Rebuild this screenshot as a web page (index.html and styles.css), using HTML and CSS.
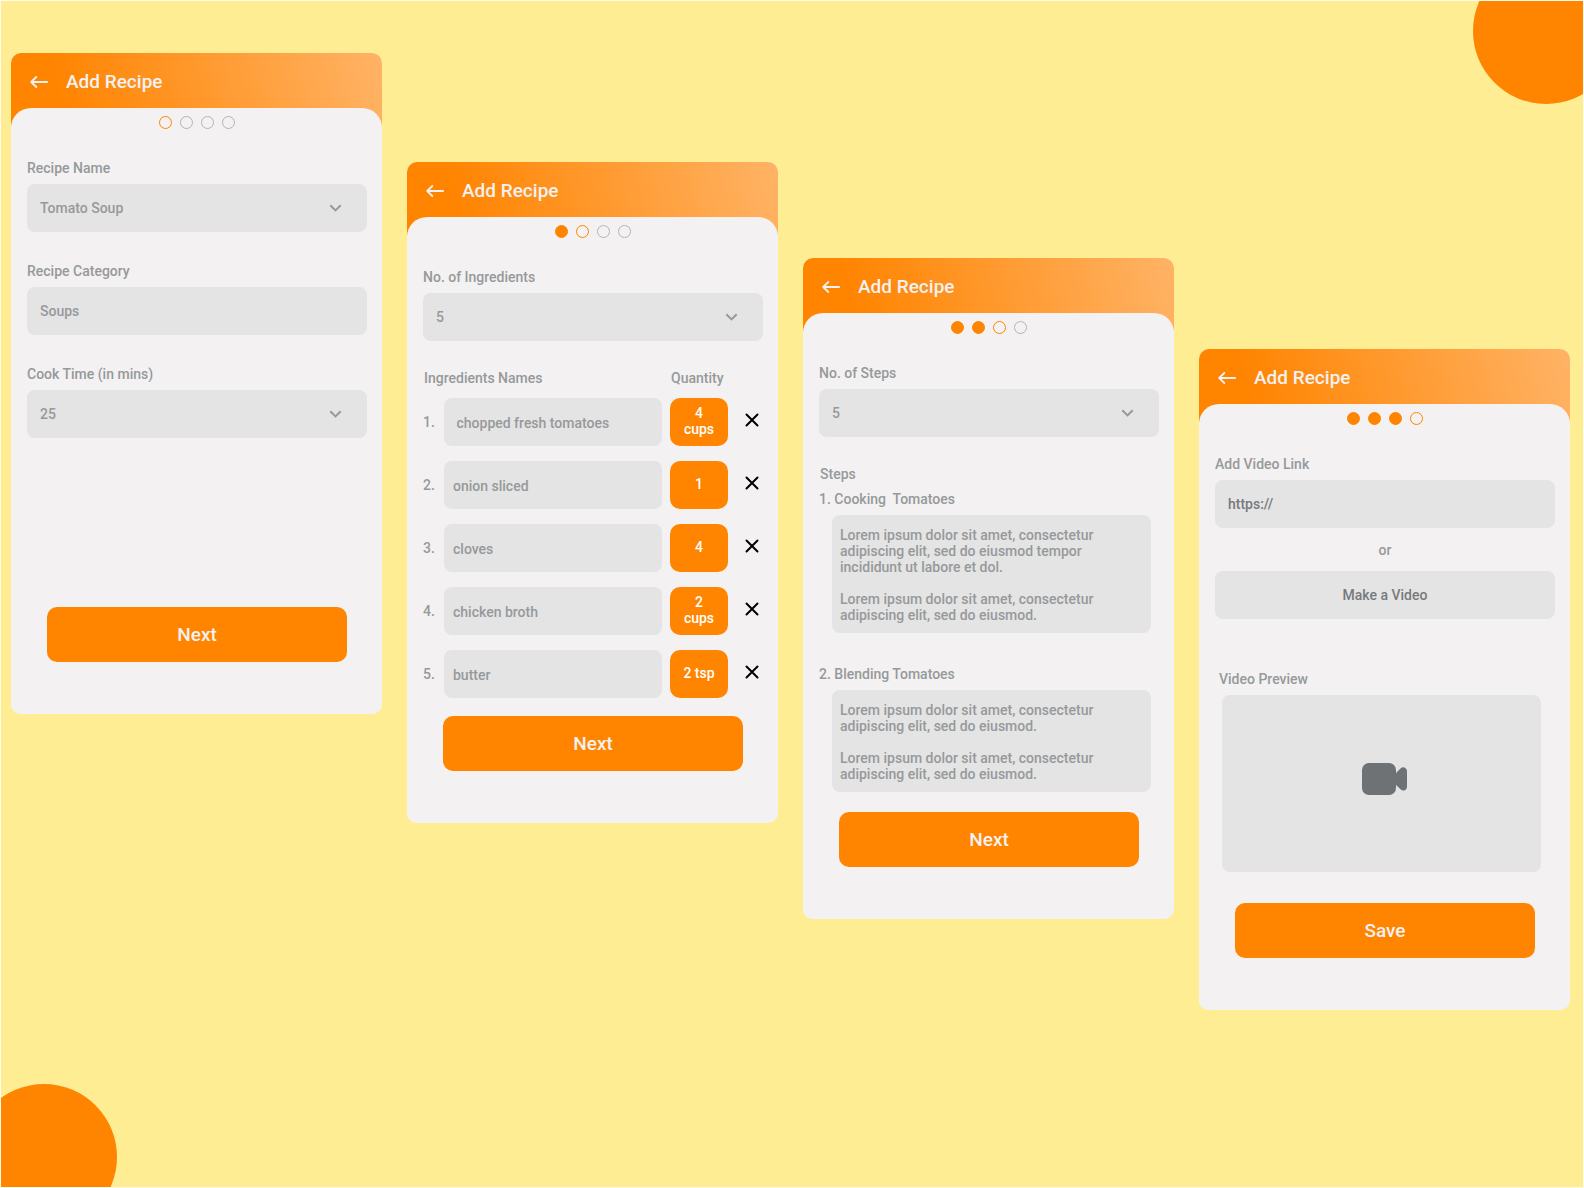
FILE: index.html
```html
<!DOCTYPE html>
<html lang="en">
<head>
    <meta charset="UTF-8">
    <meta name="viewport" content="width=device-width, initial-scale=1.0">
    <title>Add Recipe</title>
    <link rel="stylesheet" href="styles.css">
</head>
<body>
    <!-- shared icons -->
    <svg class="sprite" aria-hidden="true">
        <symbol id="icon-back" viewBox="0 0 18 12">
            <path d="M17.2 6H1.2M6.3 1L1.2 6l5.1 5" fill="none" stroke="currentColor" stroke-width="1.8" stroke-linecap="round" stroke-linejoin="round"/>
        </symbol>
        <symbol id="icon-chevron" viewBox="0 0 13 8">
            <path d="M1.300 1.200l5.200 5.200 5.200-5.200" fill="none" stroke="currentColor" stroke-width="2"/>
        </symbol>
        <symbol id="icon-close" viewBox="0 0 14 14">
            <path d="M1.500 1.500l11 11M12.500 1.500l-11 11" fill="none" stroke="currentColor" stroke-width="2" stroke-linecap="round"/>
        </symbol>
    </svg>

    <div class="page">
        <div class="circle circle-top"></div>
        <div class="circle circle-bottom"></div>

        <main class="screens">
            <!-- Step 1: basics -->
            <section class="phone">
                <header class="topbar">
                    <a href="#" class="back" aria-label="Back"><svg width="18" height="12"><use href="#icon-back"/></svg></a>
                    <h1>Add Recipe</h1>
                </header>
                <form class="sheet">
                    <ol class="dots">
                        <li class="current"></li>
                        <li></li>
                        <li></li>
                        <li></li>
                    </ol>
                    <div class="field">
                        <label for="recipeName">Recipe Name</label>
                        <div class="select">
                            <select id="recipeName"><option>Tomato Soup</option></select>
                            <svg width="13" height="8"><use href="#icon-chevron"/></svg>
                        </div>
                    </div>
                    <div class="field">
                        <label for="category">Recipe Category</label>
                        <input id="category" type="text" value="Soups">
                    </div>
                    <div class="field">
                        <label for="cookTime">Cook Time (in mins)</label>
                        <div class="select">
                            <select id="cookTime"><option>25</option></select>
                            <svg width="13" height="8"><use href="#icon-chevron"/></svg>
                        </div>
                    </div>
                    <button type="button" class="primary">Next</button>
                </form>
            </section>

            <!-- Step 2: ingredients -->
            <section class="phone phone-2">
                <header class="topbar">
                    <a href="#" class="back" aria-label="Back"><svg width="18" height="12"><use href="#icon-back"/></svg></a>
                    <h1>Add Recipe</h1>
                </header>
                <form class="sheet">
                    <ol class="dots">
                        <li class="done"></li>
                        <li class="current"></li>
                        <li></li>
                        <li></li>
                    </ol>
                    <div class="field">
                        <label for="ingredientCount">No. of Ingredients</label>
                        <div class="select">
                            <select id="ingredientCount"><option>5</option></select>
                            <svg width="13" height="8"><use href="#icon-chevron"/></svg>
                        </div>
                    </div>
                    <div class="ingredients">
                        <div class="ingredients-head">
                            <span>Ingredients Names</span>
                            <span>Quantity</span>
                        </div>
                        <div class="ingredient">
                            <label for="ing1">1.</label>
                            <input id="ing1" type="text" value=" chopped fresh tomatoes">
                            <button type="button" class="quantity">4<br>cups</button>
                            <button type="button" class="remove" aria-label="Remove"><svg width="14" height="14"><use href="#icon-close"/></svg></button>
                        </div>
                        <div class="ingredient">
                            <label for="ing2">2.</label>
                            <input id="ing2" type="text" value="onion sliced">
                            <button type="button" class="quantity">1</button>
                            <button type="button" class="remove" aria-label="Remove"><svg width="14" height="14"><use href="#icon-close"/></svg></button>
                        </div>
                        <div class="ingredient">
                            <label for="ing3">3.</label>
                            <input id="ing3" type="text" value="cloves">
                            <button type="button" class="quantity">4</button>
                            <button type="button" class="remove" aria-label="Remove"><svg width="14" height="14"><use href="#icon-close"/></svg></button>
                        </div>
                        <div class="ingredient">
                            <label for="ing4">4.</label>
                            <input id="ing4" type="text" value="chicken broth">
                            <button type="button" class="quantity">2<br>cups</button>
                            <button type="button" class="remove" aria-label="Remove"><svg width="14" height="14"><use href="#icon-close"/></svg></button>
                        </div>
                        <div class="ingredient">
                            <label for="ing5">5.</label>
                            <input id="ing5" type="text" value="butter">
                            <button type="button" class="quantity">2 tsp</button>
                            <button type="button" class="remove" aria-label="Remove"><svg width="14" height="14"><use href="#icon-close"/></svg></button>
                        </div>
                    </div>
                    <button type="button" class="primary">Next</button>
                </form>
            </section>

            <!-- Step 3: cooking steps -->
            <section class="phone phone-3">
                <header class="topbar">
                    <a href="#" class="back" aria-label="Back"><svg width="18" height="12"><use href="#icon-back"/></svg></a>
                    <h1>Add Recipe</h1>
                </header>
                <form class="sheet">
                    <ol class="dots">
                        <li class="done"></li>
                        <li class="done"></li>
                        <li class="current"></li>
                        <li></li>
                    </ol>
                    <div class="field">
                        <label for="stepCount">No. of Steps</label>
                        <div class="select">
                            <select id="stepCount"><option>5</option></select>
                            <svg width="13" height="8"><use href="#icon-chevron"/></svg>
                        </div>
                    </div>
                    <h2>Steps</h2>
                    <div class="step">
                        <label for="step1">1. Cooking&nbsp; Tomatoes</label>
                        <textarea id="step1" rows="6">Lorem ipsum dolor sit amet, consectetur
adipiscing elit, sed do eiusmod tempor
incididunt ut labore et dol.

Lorem ipsum dolor sit amet, consectetur
adipiscing elit, sed do eiusmod.</textarea>
                    </div>
                    <div class="step">
                        <label for="step2">2. Blending Tomatoes</label>
                        <textarea id="step2" rows="5">Lorem ipsum dolor sit amet, consectetur
adipiscing elit, sed do eiusmod.

Lorem ipsum dolor sit amet, consectetur
adipiscing elit, sed do eiusmod.</textarea>
                    </div>
                    <button type="button" class="primary">Next</button>
                </form>
            </section>

            <!-- Step 4: video -->
            <section class="phone phone-4">
                <header class="topbar">
                    <a href="#" class="back" aria-label="Back"><svg width="18" height="12"><use href="#icon-back"/></svg></a>
                    <h1>Add Recipe</h1>
                </header>
                <form class="sheet">
                    <ol class="dots">
                        <li class="done"></li>
                        <li class="done"></li>
                        <li class="done"></li>
                        <li class="current"></li>
                    </ol>
                    <div class="field video-link">
                        <label for="videoLink">Add Video Link</label>
                        <input id="videoLink" type="text" value="https://">
                    </div>
                    <p class="or">or</p>
                    <button type="button" class="secondary">Make a Video</button>
                    <div class="preview">
                        <h2>Video Preview</h2>
                        <div class="preview-box">
                            <svg width="45" height="32" viewBox="0 0 45 32">
                                <rect width="34" height="32" rx="7"/>
                                <path d="M33 11L38.500 5.500Q40.500 3.500 43 4.700Q45 6 45 8V24Q45 26 43 27.200Q40.500 28.200 38.500 26.300L33 21Z"/>
                            </svg>
                        </div>
                    </div>
                    <button type="button" class="primary">Save</button>
                </form>
            </section>
        </main>
    </div>
</body>
</html>
```
FILE: styles.css
```css
* {
    box-sizing: border-box;
}
body {
    margin: 0;
    font-family: Roboto, "Liberation Sans", sans-serif;
    font-size: 14px;
    font-weight: 500;
    line-height: 16px;
    color: #96999b;
}
h1, h2, p, ol {
    margin: 0;
    padding: 0;
    font-size: 14px;
    font-weight: 500;
}
input, select, textarea, button {
    font: inherit;
    color: inherit;
    border: none;
    margin: 0;
}
button {
    cursor: pointer;
}
.sprite {
    display: none;
}
.page {
    position: relative;
    overflow: hidden;
    min-height: 100vh;
    padding: 52px 13px 52px 10px;
    border: 1px solid #fffbe8;
    background-color: #ffed93;
}
.circle {
    position: absolute;
    width: 146px;
    height: 146px;
    border-radius: 50%;
    background-color: #ff8400;
}
.circle-top {
    top: -43px;
    right: -36px;
}
.circle-bottom {
    bottom: -43px;
    left: -30px;
}
.screens {
    position: relative;
    display: grid;
    grid-template-columns: repeat(4, 1fr);
    align-items: start;
    gap: 25px;
}

/* phone frame */
.phone {
    display: flex;
    flex-direction: column;
    min-height: 661px;
    border-radius: 10px;
    background-color: #f3f1f2;
}
.phone-2 {
    margin-top: 109px;
}
.phone-3 {
    margin-top: 205px;
}
.phone-4 {
    margin-top: 296px;
}
.topbar {
    display: flex;
    align-items: center;
    gap: 18px;
    padding: 18px 19px 33px;
    border-radius: 10px 10px 0 0;
    background: linear-gradient(75deg, #ff8400 14%, #ffb366);
    color: #f3f1f2;
}
.topbar h1 {
    font-size: 19px;
    line-height: 22px;
}
.back {
    display: flex;
    color: inherit;
}
.sheet {
    flex: 1;
    display: flex;
    flex-direction: column;
    margin-top: -18px;
    padding: 8px 15px 52px 16px;
    border-radius: 20px 20px 10px 10px;
    background-color: #f3f1f2;
}
.dots {
    display: flex;
    justify-content: center;
    gap: 8px;
    margin-bottom: 31px;
    list-style: none;
}
.dots li {
    width: 13px;
    height: 13px;
    border: 1px solid #b4b4b4;
    border-radius: 50%;
}
.dots .current {
    border-color: #ff8400;
}
.dots .done {
    border-color: #ff8400;
    background-color: #ff8400;
}

/* fields */
.field {
    display: flex;
    flex-direction: column;
    gap: 8px;
    margin-bottom: 31px;
}
.phone-2 .field,
.phone-3 .field {
    margin-bottom: 29px;
}
.field input,
.select select {
    width: 100%;
    height: 48px;
    padding: 0 13px;
    border-radius: 8px;
    background-color: #e4e4e4;
    appearance: none;
}
.select {
    position: relative;
}
.select svg {
    position: absolute;
    top: 20px;
    right: 25px;
    pointer-events: none;
}
.primary {
    height: 55px;
    margin: auto 20px 0;
    border-radius: 10px;
    background-color: #ff8400;
    color: #f3f1f2;
    font-size: 19px;
}

/* ingredients */
.ingredients {
    display: flex;
    flex-direction: column;
    gap: 15px;
}
.ingredients-head {
    display: grid;
    grid-template-columns: 1fr 92px;
    margin-bottom: -3px;
    padding-left: 1px;
}
.ingredient {
    display: grid;
    grid-template-columns: 13px 1fr 58px 23px;
    gap: 8px;
    align-items: center;
    padding-right: 4px;
}
.ingredient input {
    width: 100%;
    height: 48px;
    padding: 2px 9px 0;
    border-radius: 8px;
    background-color: #e4e4e4;
}
.quantity {
    height: 48px;
    padding: 0 0 3px;
    border-radius: 10px;
    background-color: #ff8400;
    color: #fff;
}
.remove {
    display: flex;
    justify-content: flex-end;
    padding: 0 0 4px;
    background: none;
    color: #000;
}

/* steps */
.phone-3 h2 {
    margin-bottom: 9px;
    padding-left: 1px;
}
.step {
    display: flex;
    flex-direction: column;
    gap: 8px;
    margin-bottom: 33px;
}
.step:nth-last-child(2) {
    margin-bottom: 0;
}
.step textarea {
    margin: 0 8px 0 13px;
    padding: 12px 8px 10px;
    border-radius: 8px;
    background-color: #e4e4e4;
    resize: none;
    overflow: hidden;
}

/* video */
.video-link {
    margin-bottom: 14px;
}
.video-link input,
.secondary {
    color: #777a7c;
}
.or {
    margin-bottom: 13px;
    text-align: center;
}
.secondary {
    height: 48px;
    border-radius: 8px;
    background-color: #e4e4e4;
}
.preview {
    display: flex;
    flex-direction: column;
    gap: 8px;
    margin-top: 52px;
    padding: 0 14px 0 4px;
}
.preview-box {
    display: flex;
    align-items: center;
    justify-content: center;
    height: 177px;
    margin-left: 3px;
    padding: 0 0 10px 6px;
    border-radius: 8px;
    background-color: #e4e4e4;
    fill: #6e7275;
}
```
